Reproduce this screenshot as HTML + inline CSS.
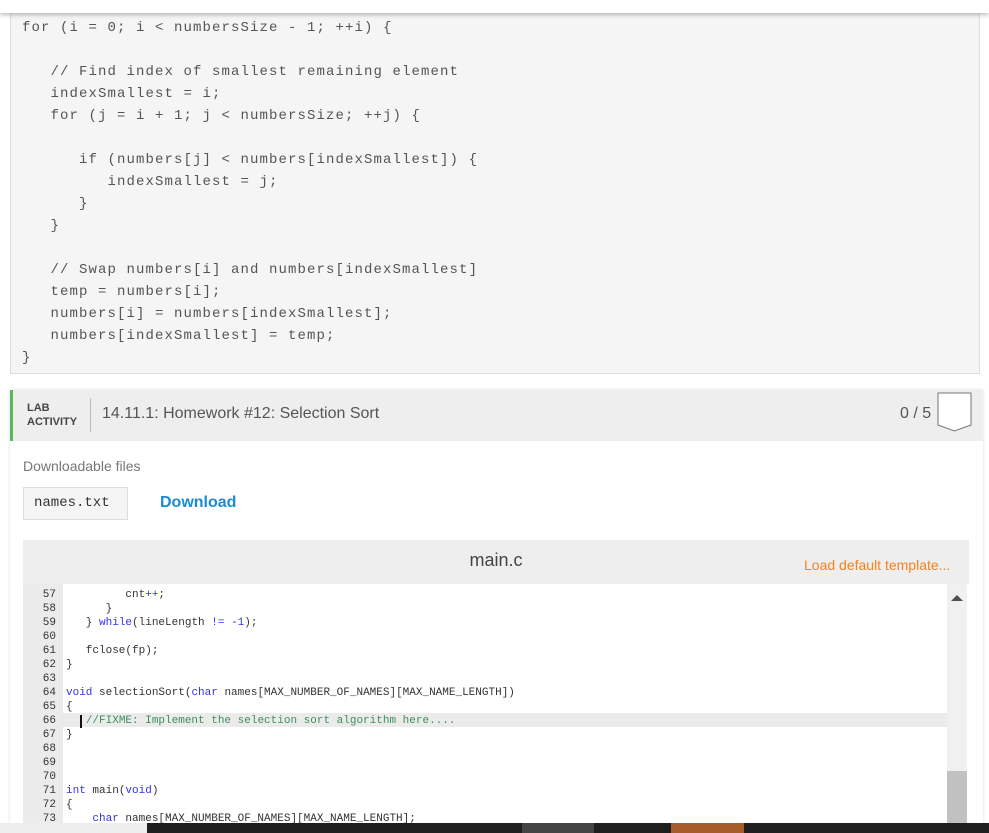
<!DOCTYPE html>
<html style="overflow:hidden;height:833px"><head><meta charset="utf-8"><style>
*{margin:0;padding:0;box-sizing:border-box}
body{width:989px;height:833px;overflow:hidden;background:#fff;font-family:"Liberation Sans",sans-serif;position:relative}
.topbar{position:absolute;left:0;top:0;width:989px;height:13px;background:#fff;box-shadow:0 2px 4px rgba(0,0,0,.25);z-index:2}
.code{position:absolute;left:10px;top:5px;width:970px;height:369px;background:#f5f5f5;border:1px solid #ddd;}
.code pre{position:absolute;left:11px;top:11px;font-family:"Liberation Mono",monospace;font-size:14px;letter-spacing:1.1px;line-height:22px;color:#555}
.panel{position:absolute;left:10px;top:390px;width:973px;height:443px;background:#fff;box-shadow:0 0 3px rgba(0,0,0,.15)}
.hdr{position:absolute;left:0;top:0;width:973px;height:51px;background:#eee;border-left:3px solid #5cb85c}
.lab{position:absolute;left:14px;top:11px;font-size:11px;font-weight:bold;color:#444;line-height:14px}
.div{position:absolute;left:77px;top:8px;width:1px;height:34px;background:#bbb}
.title{position:absolute;left:89px;top:15px;font-size:16px;color:#555}
.score{position:absolute;left:887px;top:15px;font-size:16px;color:#555}
.dl{position:absolute;left:13px;top:68px;font-size:14px;color:#777}
.file{position:absolute;left:13px;top:97px;width:105px;height:33px;background:#f5f5f5;border:1px solid #ddd;font-family:"Liberation Mono",monospace;font-size:14px;color:#333;line-height:31px;padding-left:10px}
.down{position:absolute;left:150px;top:104px;font-size:16px;font-weight:bold;color:#1a8ad4}
.ed{position:absolute;left:13px;top:150px;width:946px;height:293px;background:#eee}
.fname{position:absolute;left:0;width:946px;top:10px;text-align:center;font-size:18px;color:#444}
.load{position:absolute;left:781px;top:17px;font-size:14px;color:#f5821f}
.cm{position:absolute;left:0;top:44px;width:946px;height:249px;background:#fff;overflow:hidden}
.gut{position:absolute;left:0;top:0;width:40px;height:249px;background:#ebebeb}
.ln{position:absolute;left:0;width:33px;text-align:right;font-family:"Liberation Mono",monospace;font-size:11px;color:#333}
.lc{position:absolute;left:43px;font-family:"Liberation Mono",monospace;font-size:11px;color:#333;white-space:pre}
.k{color:#3333ee}.c{color:#3f8f5f}
.act{position:absolute;left:0;top:129px;width:924px;height:14px;background:#ebebeb}
.sb{position:absolute;left:924px;top:0;width:20px;height:249px;background:#f0f0f0}
.thumb{position:absolute;left:0;top:187px;width:20px;height:62px;background:#c1c1c1}
.bot{position:absolute;left:0;top:823px;width:989px;height:10px;background:#1e1e1e;z-index:3}
</style></head><body>
<div class="topbar"></div>
<div class="code"><pre>for (i = 0; i &lt; numbersSize - 1; ++i) {

   // Find index of smallest remaining element
   indexSmallest = i;
   for (j = i + 1; j &lt; numbersSize; ++j) {

      if (numbers[j] &lt; numbers[indexSmallest]) {
         indexSmallest = j;
      }
   }

   // Swap numbers[i] and numbers[indexSmallest]
   temp = numbers[i];
   numbers[i] = numbers[indexSmallest];
   numbers[indexSmallest] = temp;
}</pre></div>
<div class="panel">
 <div class="hdr">
  <div class="lab">LAB<br>ACTIVITY</div>
  <div class="div"></div>
  <div class="title">14.11.1: Homework #12: Selection Sort</div>
  <div class="score">0 / 5</div>
  <svg style="position:absolute;left:924px;top:2px" width="36" height="40"><path d="M1 1H34V33L17.5 39L1 33Z" fill="#fff" stroke="#777" stroke-width="1"/></svg>
 </div>
 <div class="dl">Downloadable files</div>
 <div class="file">names.txt</div>
 <div class="down">Download</div>
 <div class="ed">
  <div class="fname">main.c</div>
  <div class="load">Load default template...</div>
  <div class="cm">
   <div class="gut"></div>
   <div class="act"></div>
   <div style="position:absolute;left:57px;top:131px;width:2px;height:13px;background:#111"></div>
   <div class="ln" style="top:5px">57</div><div class="lc" style="top:5px">         cnt<span class="k">++</span>;</div>
   <div class="ln" style="top:19px">58</div><div class="lc" style="top:19px">      }</div>
   <div class="ln" style="top:33px">59</div><div class="lc" style="top:33px">   } <span class="k">while</span>(lineLength <span class="k">!=</span> <span class="k">-1</span>);</div>
   <div class="ln" style="top:47px">60</div>
   <div class="ln" style="top:61px">61</div><div class="lc" style="top:61px">   fclose(fp);</div>
   <div class="ln" style="top:75px">62</div><div class="lc" style="top:75px">}</div>
   <div class="ln" style="top:89px">63</div>
   <div class="ln" style="top:103px">64</div><div class="lc" style="top:103px"><span class="k">void</span> selectionSort(<span class="k">char</span> names[MAX_NUMBER_OF_NAMES][MAX_NAME_LENGTH])</div>
   <div class="ln" style="top:117px">65</div><div class="lc" style="top:117px">{</div>
   <div class="ln" style="top:131px">66</div><div class="lc" style="top:131px">   <span class="c">//FIXME: Implement the selection sort algorithm here....</span></div>
   <div class="ln" style="top:145px">67</div><div class="lc" style="top:145px">}</div>
   <div class="ln" style="top:159px">68</div>
   <div class="ln" style="top:173px">69</div>
   <div class="ln" style="top:187px">70</div>
   <div class="ln" style="top:201px">71</div><div class="lc" style="top:201px"><span class="k">int</span> main(<span class="k">void</span>)</div>
   <div class="ln" style="top:215px">72</div><div class="lc" style="top:215px">{</div>
   <div class="ln" style="top:229px">73</div><div class="lc" style="top:229px">    <span class="k">char</span> names[MAX_NUMBER_OF_NAMES][MAX_NAME_LENGTH];</div>
   <div class="sb"><svg style="position:absolute;left:4px;top:10px" width="12" height="8"><path d="M0 7L6 1L12 7Z" fill="#505050"/></svg><div class="thumb"></div></div>
  </div>
 </div>
</div>
<div class="bot">
 <div style="position:absolute;left:0;top:0;width:147px;height:10px;background:#eee"></div>
 <div style="position:absolute;left:522px;top:0;width:72px;height:10px;background:#444"></div>
 <div style="position:absolute;left:671px;top:0;width:73px;height:10px;background:#a65c28"></div>
</div>
</body></html>
